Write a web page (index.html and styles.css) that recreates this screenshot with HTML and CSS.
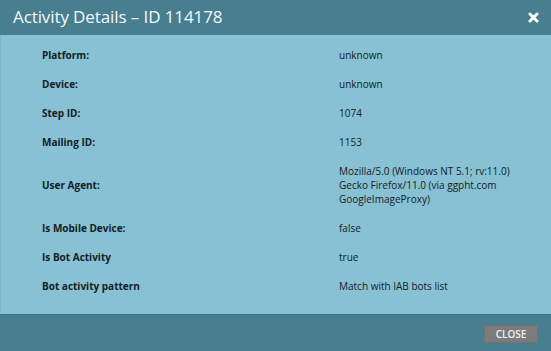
FILE: index.html
```html
<!DOCTYPE html>
<html>
<head>
<meta charset="utf-8">
<link rel="stylesheet" href="styles.css">
</head>
<body>
<div class="modal">
  <div class="header">
    <div class="title">Activity Details – ID 114178</div>
    <svg class="close-x" width="11" height="11" viewBox="0 0 11 11"><path d="M2 2 L9 9 M9 2 L2 9" stroke="#fff" stroke-width="3" stroke-linecap="round"/></svg>
  </div>
  <div class="content">
    <div class="grid">
      <div class="label">Platform:</div><div class="value">unknown</div>
      <div class="label">Device:</div><div class="value">unknown</div>
      <div class="label">Step ID:</div><div class="value">1074</div>
      <div class="label">Mailing ID:</div><div class="value">1153</div>
      <div class="label">User Agent:</div><div class="value">Mozilla/5.0 (Windows NT 5.1; rv:11.0)<br>Gecko Firefox/11.0 (via ggpht.com<br>GoogleImageProxy)</div>
      <div class="label">Is Mobile Device:</div><div class="value">false</div>
      <div class="label">Is Bot Activity</div><div class="value">true</div>
      <div class="label">Bot activity pattern</div><div class="value">Match with IAB bots list</div>
    </div>
  </div>
  <div class="footer">
    <button class="close-btn">CLOSE</button>
  </div>
</div>
</body>
</html>
```
FILE: styles.css
```css
html, body {
  margin: 0;
  padding: 0;
}
body {
  width: 551px;
  height: 351px;
  overflow: hidden;
  font-family: "Open Sans", "Liberation Sans", sans-serif;
}
.modal {
  display: flex;
  flex-direction: column;
  height: 351px;
  background: #87c1d3;
}
.header {
  height: 35px;
  background: #477e90;
  display: flex;
  align-items: center;
  justify-content: space-between;
  padding: 0 12px 0 13px;
  box-sizing: border-box;
}
.title {
  color: #f4f9fa;
  font-size: 17px;
  letter-spacing: -0.1px;
  line-height: 20px;
  margin-top: -1px;
}
.close-x {
  display: block;
  margin-top: -1px;
}
.content {
  flex: 1;
  padding: 5px 0 0 41px;
  border-left: 1px solid #7fb6c8;
}
.grid {
  display: grid;
  grid-template-columns: 297px 1fr;
  row-gap: 15px;
  padding-top: 8px;
  font-size: 10px;
  line-height: 14px;
  color: #142024;
}
.label {
  font-weight: 700;
  align-self: center;
}
.value {
  align-self: center;
}
.footer {
  height: 37px;
  background: #477e90;
  border-top: 1px solid #3f7486;
  box-sizing: border-box;
  display: flex;
  align-items: center;
  justify-content: flex-end;
  padding: 0 13px 0 0;
}
.close-btn {
  width: 54px;
  height: 18px;
  background: #7b7b7b;
  border: 1px solid #727272;
  color: #f2f2f2;
  font-family: "Open Sans", "Liberation Sans", sans-serif;
  font-size: 10px;
  font-weight: 600;
  padding: 0;
  margin-top: 1px;
}
```
